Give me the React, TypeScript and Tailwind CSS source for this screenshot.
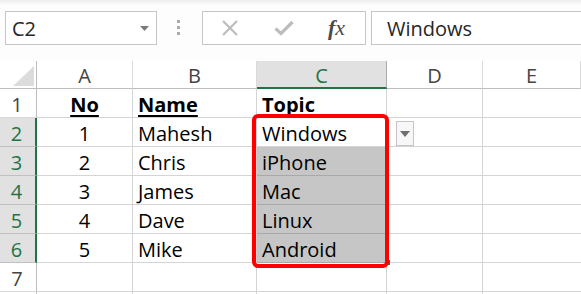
import React from "react";

const font = { fontFamily: '"Open Sans", "Liberation Sans", sans-serif' };

const rowsData = [
  { n: "1", a: "No", b: "Name", c: "Topic", head: true },
  { n: "2", a: "1", b: "Mahesh", c: "Windows" },
  { n: "3", a: "2", b: "Chris", c: "iPhone" },
  { n: "4", a: "3", b: "James", c: "Mac" },
  { n: "5", a: "4", b: "Dave", c: "Linux" },
  { n: "6", a: "5", b: "Mike", c: "Android" },
  { n: "7", a: "", b: "", c: "" },
  { n: "", a: "", b: "", c: "" },
];

function Toolbar() {
  return (
    <div className="relative h-[61px] bg-[#fdfdfd] flex items-start pt-[11px]">
      <div className="absolute left-0 right-0 top-0 h-[5px] bg-gradient-to-b from-[#ececec] to-[#fdfdfd]" />
      <div className="relative ml-[5px] w-[152px] h-[34px] border border-[#c6c6c6] bg-white flex items-center pl-[6px] pt-[2px] text-[20px] text-[#262626]">
        C2
        <svg className="absolute left-[134px] top-[14px]" width="9" height="5" viewBox="0 0 9 5">
          <path d="M0 0 L9 0 L4.5 5 Z" fill="#7a7a7a" />
        </svg>
      </div>
      <div className="ml-[20px] mt-[9px] flex flex-col gap-[3px]">
        <div className="w-[3px] h-[3px] bg-[#ababab]" />
        <div className="w-[3px] h-[3px] bg-[#ababab]" />
        <div className="w-[3px] h-[3px] bg-[#ababab]" />
      </div>
      <div className="ml-[22px] w-[164px] h-[34px] border border-[#c6c6c6] bg-white flex items-center">
        <svg className="ml-[18px]" width="18" height="18" viewBox="0 0 18 18">
          <path d="M2 2 L16 16 M16 2 L2 16" stroke="#bdbdbd" strokeWidth="2.2" />
        </svg>
        <svg className="ml-[35px]" width="20" height="16" viewBox="0 0 20 16">
          <path d="M1.5 8.5 L7 13.5 L18.5 2" stroke="#bdbdbd" strokeWidth="3.2" fill="none" />
        </svg>
        <span
          className="ml-[34px] text-[22px] italic text-[#4a4a4a] leading-none"
          style={{ fontFamily: '"Liberation Serif", "DejaVu Serif", serif' }}
        >
          <span className="font-bold">f</span>x
        </span>
      </div>
      <div className="ml-[5px] flex-1 h-[34px] border-y border-l border-[#c6c6c6] bg-white flex items-center pl-[15px] pt-[2px] text-[20px] text-[#262626]">
        Windows
      </div>
    </div>
  );
}

function Grid() {
  const cols = ["A", "B", "C", "D", "E"];
  return (
    <div className="relative bg-white">
      <div className="grid grid-cols-[37px_96px_124px_130px_96px_1fr]">
        <div className="relative h-[28px] border-r border-b border-[#bdbdbd] bg-white">
          <svg className="absolute left-[13px] top-[5px]" width="21" height="20" viewBox="0 0 21 20">
            <path d="M21 0 L21 20 L0 20 Z" fill="#dcdcdc" />
          </svg>
        </div>
        {cols.map((c) => {
          const sel = c === "C";
          return (
            <div
              key={c}
              className={
                "h-[28px] flex items-center justify-center text-[20px] leading-none border-r " +
                (sel
                  ? "bg-[#e1e1e1] text-[#217346] border-[#ababab] border-b-2 border-b-[#217346]"
                  : "bg-white text-[#444] border-[#dadada] border-b border-b-[#bdbdbd]")
              }
            >
              <span className="pt-[3px]">{c}</span>
            </div>
          );
        })}
        {rowsData.map((r, i) => {
          const rowSel = i >= 1 && i <= 5;
          const cSel = i >= 2 && i <= 5;
          return (
            <React.Fragment key={i}>
              <div
                className={
                  "h-[29px] flex items-center justify-center pt-[3px] text-[20px] border-b " +
                  (rowSel
                    ? "bg-[#e1e1e1] text-[#217346] border-b-[#c0c0c0] border-r-2 border-r-[#217346]"
                    : "bg-white text-[#444] border-b-[#dadada] border-r border-r-[#bdbdbd]")
                }
              >
                <span className="pr-[2px]">{r.n}</span>
              </div>
              <div className="h-[29px] border-r border-b border-[#d4d4d4] flex items-center justify-center pt-[3px] text-[20px] text-black">
                <span className={r.head ? "font-bold underline underline-offset-[3px] decoration-[2px]" : ""}>{r.a}</span>
              </div>
              <div className="h-[29px] border-r border-b border-[#d4d4d4] flex items-center pl-[5px] pt-[3px] text-[20px] text-black">
                <span className={r.head ? "font-bold underline underline-offset-[3px] decoration-[2px]" : ""}>{r.b}</span>
              </div>
              <div
                className={
                  "h-[29px] border-r border-b flex items-center pl-[5px] pt-[3px] text-[20px] text-black " +
                  (cSel ? "bg-[#c6c6c6] border-[#a9a9a9]" : "border-[#d4d4d4]")
                }
              >
                <span className={r.head ? "font-bold" : ""}>{r.c}</span>
              </div>
              <div className="h-[29px] border-r border-b border-[#d4d4d4]" />
              <div className="h-[29px] border-b border-[#d4d4d4]" />
            </React.Fragment>
          );
        })}
      </div>
      <div className="absolute left-[396px] top-[60px] w-[18px] h-[25px] border border-[#c6c6c6] bg-[#f7f7f7] flex items-center justify-center">
        <svg width="10" height="6" viewBox="0 0 10 6">
          <path d="M0 0 L10 0 L5 6 Z" fill="#6f6f6f" />
        </svg>
      </div>
      <div className="absolute left-[385px] top-[199px] w-[5px] h-[5px] bg-[#217346]" />
      <div className="absolute left-[252px] top-[53px] w-[137px] h-[154px] border-4 border-[#ff0000] rounded-[6px]" />
    </div>
  );
}

export default function App() {
  return (
    <div className="w-[581px] h-[294px] overflow-hidden bg-white" style={font}>
      <Toolbar />
      <Grid />
    </div>
  );
}
